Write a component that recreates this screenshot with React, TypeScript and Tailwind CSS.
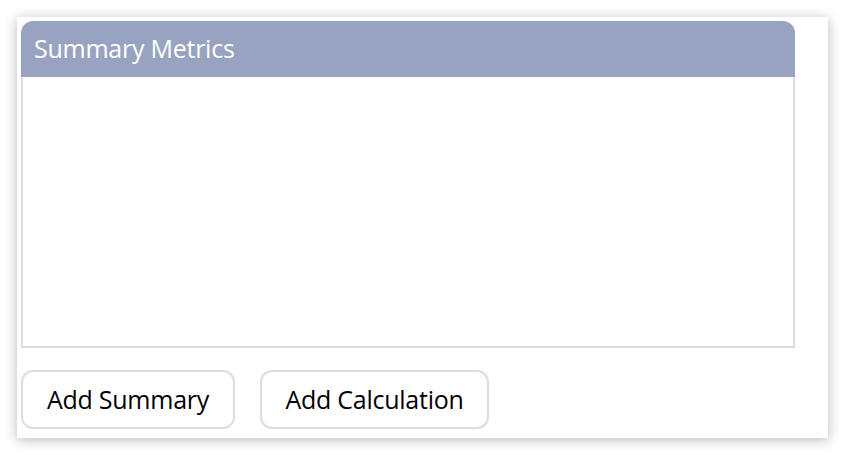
export default function App() {
  return (
    <div
      className="w-[845px] h-[455px] bg-white pt-[17px] pl-[17px]"
      style={{ fontFamily: '"Open Sans", "Noto Sans", sans-serif' }}
    >
      <div className="w-[811px] h-[421px] bg-white shadow-[0_2px_12px_rgba(0,0,0,0.28)] pt-[4px] pl-[4px]">
        <div className="w-[774px]">
          <div className="h-[56px] bg-[#98a3c1] rounded-t-[12px] flex items-center pl-[13px]">
            <span className="text-white text-[25px] tracking-[-0.25px] leading-none pb-[1px]">Summary Metrics</span>
          </div>
          <div className="h-[271px] border-2 border-t-0 border-[#dcdcdc] bg-white" />
        </div>
        <div className="flex gap-[25px] mt-[22px]">
          <button className="h-[59px] w-[214px] border-2 border-[#dddddd] rounded-[12px] bg-white text-[25px] text-black tracking-[-0.25px]">
            Add Summary
          </button>
          <button className="h-[59px] w-[229px] border-2 border-[#dddddd] rounded-[12px] bg-white text-[25px] text-black tracking-[-0.25px]">
            Add Calculation
          </button>
        </div>
      </div>
    </div>
  );
}
